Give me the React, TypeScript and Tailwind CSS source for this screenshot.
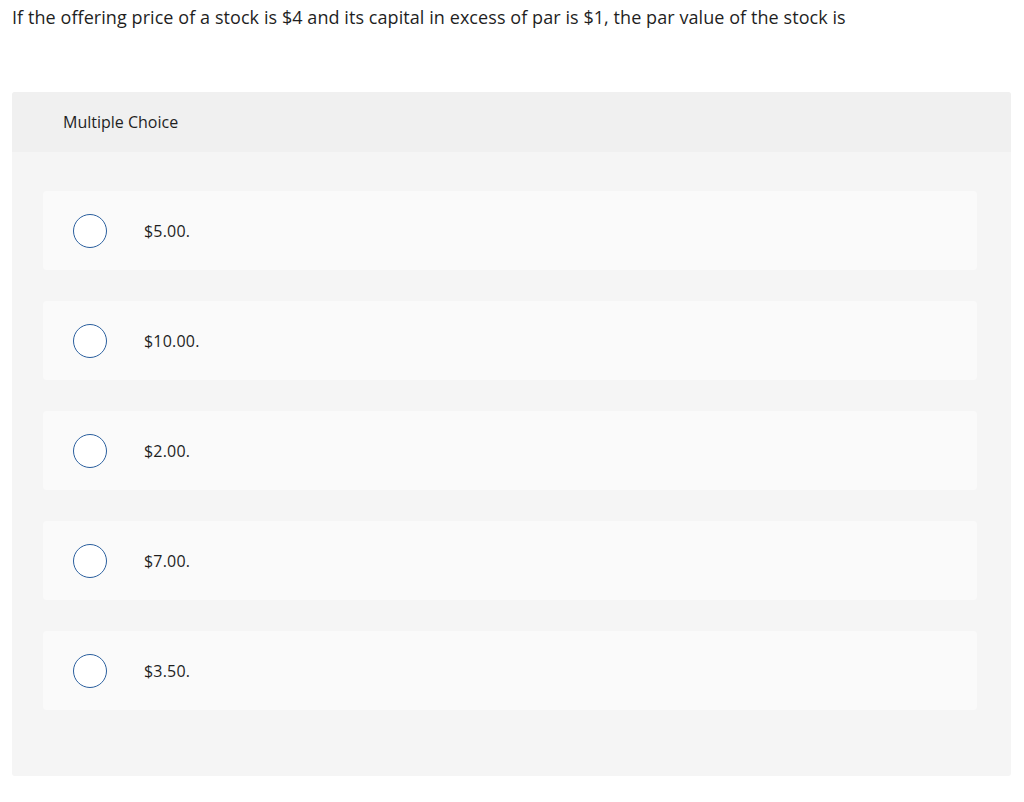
export default function App() {
  const options = ["$5.00.", "$10.00.", "$2.00.", "$7.00.", "$3.50."];
  return (
    <div className="w-[1024px] h-[802px] bg-white text-[#1f1f1f]" style={{ fontFamily: '"Open Sans", sans-serif' }}>
      <div className="pt-[5px] pl-[12px] text-[18px] leading-[24px] tracking-[0.07px]">
        If the offering price of a stock is $4 and its capital in excess of par is $1, the par value of the stock is
      </div>
      <div className="mt-[63px] ml-[12px] w-[999px] rounded-[3px] bg-[#f5f5f5] overflow-hidden">
        <div className="h-[60px] bg-[#f0f0f0] flex items-center pl-[51px] text-[16px]">Multiple Choice</div>
        <div className="pt-[39px] pb-[66px] pl-[31px] pr-[34px] flex flex-col gap-[31px]">
          {options.map((o) => (
            <div key={o} className="h-[79px] rounded-[4px] bg-[#fafafa] flex items-center">
              <div className="ml-[30px] w-[34px] h-[34px] rounded-full border-[1.5px] border-[#2a5f9e] bg-white" />
              <div className="ml-[37px] text-[16px] tracking-[0.2px]">{o}</div>
            </div>
          ))}
        </div>
      </div>
    </div>
  );
}
